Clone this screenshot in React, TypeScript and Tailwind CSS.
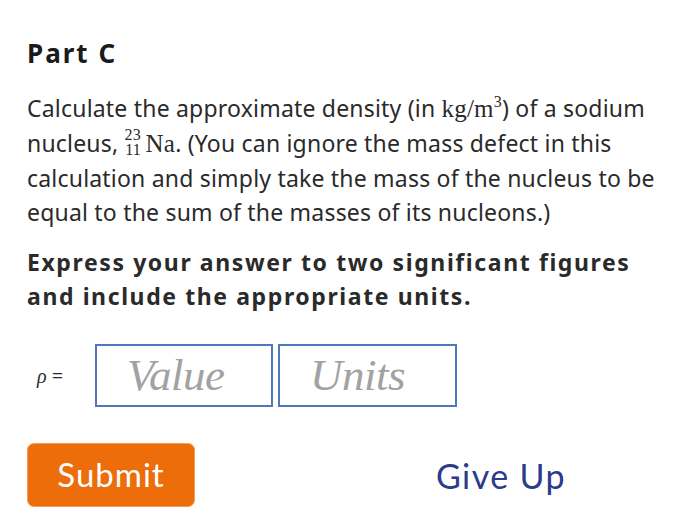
import React from "react";

const sans = "font-['Noto_Sans','Open_Sans',sans-serif]";
const serif = "font-['Liberation_Serif','DejaVu_Serif',serif]";

function Nuclide() {
  return (
    <span className="relative inline-block pl-[21px]">
      <span className={`absolute left-0 top-[1px] flex flex-col items-end text-[16px] leading-[15px] ${serif}`}>
        <span>23</span>
        <span>11</span>
      </span>
      <span className={`${serif} text-[25px]`}>Na</span>
    </span>
  );
}

export default function App() {
  return (
    <div className={`w-[700px] h-[517px] bg-white text-[#2a2a2a] ${sans} px-[27px] pt-[36px]`}>
      <h2 className="text-[26px] font-bold leading-[34px] tracking-[2px] text-[#1a1a1a]">Part C</h2>

      <p className="mt-[21px] text-[23px] leading-[34px] tracking-[0.2px] whitespace-nowrap">
        Calculate the approximate density (in{" "}
        <span className={`${serif} text-[25px]`}>
          kg/m<sup className="text-[16px] relative -top-[10px] align-baseline">3</sup>
        </span>
        ) of a sodium
        <br />
        nucleus, <Nuclide />. (You can ignore the mass defect in this
        <br />
        calculation and simply take the mass of the nucleus to be
        <br />
        equal to the sum of the masses of its nucleons.)
      </p>

      <p className="mt-[16px] text-[23px] leading-[34px] font-bold tracking-[1.6px] whitespace-nowrap">
        Express your answer to two significant figures
        <br />
        and include the appropriate units.
      </p>

      <div className="mt-[31px] flex items-center">
        <span className="w-[68px] pl-[10px] text-[20px]">
          <span className={`${serif} italic`}>ρ</span> =
        </span>
        <div className="flex gap-[5px]">
          <div className="w-[178px] h-[63px] border-2 border-[#4f78b8] flex items-center pl-[30px]">
            <span className={`${serif} italic text-[45px] text-[#a2a2a2] tracking-[-0.5px] leading-none`}>Value</span>
          </div>
          <div className="w-[179px] h-[63px] border-2 border-[#4f78b8] flex items-center pl-[30px]">
            <span className={`${serif} italic text-[45px] text-[#a2a2a2] tracking-[-0.5px] leading-none`}>Units</span>
          </div>
        </div>
      </div>

      <div className="mt-[36px] flex items-center">
        <button className="w-[168px] h-[64px] rounded-[7px] bg-[#ec6d0a] border border-[#f0a050] text-white text-[33px] tracking-[1px] font-['Lato',sans-serif]">
          Submit
        </button>
        <button className="ml-[241px] text-[34px] tracking-[1.4px] text-[#2c3a8a] font-['Lato',sans-serif]">Give Up</button>
      </div>
    </div>
  );
}
